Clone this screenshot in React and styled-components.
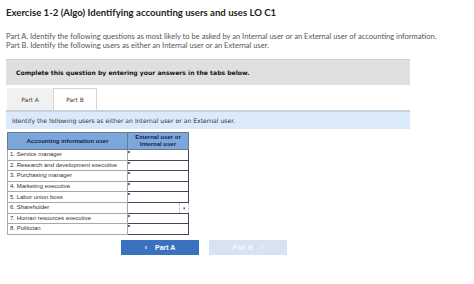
import styled, { createGlobalStyle } from "styled-components";

const GlobalStyle = createGlobalStyle`
  html, body {
    margin: 0;
    padding: 0;
    background: #ffffff;
  }
`;

const Page = styled.div`
  padding: 6px 6px 0 6px;
  width: 462px;
  font-family: Lato, "Liberation Sans", sans-serif;
  color: #333;
`;

const Title = styled.h1`
  margin: 0;
  font-size: 9.6px;
  line-height: 13px;
  font-weight: 700;
  color: #222;
`;

const Intro = styled.p`
  margin: 13px 0 0 0;
  font-size: 7.55px;
  line-height: 9px;
  color: #555;
`;

const Panel = styled.div`
  width: 404px;
  margin-top: 9px;
`;

const Notice = styled.div`
  height: 25px;
  background: #dfdfdf;
  border-top: 1px solid #cfcfcf;
  display: flex;
  align-items: center;
  padding-left: 10px;
  font-family: "DejaVu Sans", Verdana, sans-serif;
  font-weight: 700;
  font-size: 6.1px;
  color: #111;
`;

const Tabs = styled.div`
  display: flex;
  margin-top: 3px;
  padding-left: 1px;
`;

const Tab = styled.div`
  width: ${(p) => p.$w}px;
  height: 22px;
  display: flex;
  align-items: center;
  justify-content: center;
  box-sizing: border-box;
  font-family: "DejaVu Sans", Verdana, sans-serif;
  font-size: 5.9px;
  color: #444;
  background: ${(p) => (p.$active ? "#ffffff" : "#f1f1f1")};
  border: 1px solid ${(p) => (p.$active ? "#d4d4d4" : "#f1f1f1")};
  border-bottom: none;
  margin-bottom: ${(p) => (p.$active ? "-1px" : "0")};
  position: relative;
  z-index: 1;
`;

const Band = styled.div`
  height: 17px;
  background: #dbeafa;
  border-top: 2px solid #c5d2de;
  display: flex;
  align-items: center;
  padding-left: 6px;
  font-family: "DejaVu Sans", Verdana, sans-serif;
  font-size: 6.1px;
  color: #333;
`;

const Table = styled.table`
  margin: 3px 0 0 1px;
  width: 181px;
  table-layout: fixed;
  border-collapse: collapse;
  font-family: "Liberation Sans", Arial, sans-serif;
  font-size: 6px;
`;

const Col = styled.col`
  width: ${(p) => p.$w}px;
`;

const Head = styled.th`
  background: #7ca7dc;
  color: #1c2240;
  font-weight: 700;
  font-size: 6px;
  line-height: 7px;
  height: 16px;
  padding: 0;
  border: 1px solid #6b7a90;
  text-align: center;
`;

const Label = styled.td`
  height: 9.6px;
  padding: 0 0 0 2px;
  border: 1px solid #a8a8a8;
  color: #333;
  line-height: 9px;
  white-space: nowrap;
  overflow: hidden;
`;

const AnswerCell = styled.td`
  padding: 0;
  height: 9.6px;
  border: 1px solid ${(p) => (p.$select ? "#a9b6cc" : "#3d4560")};
  border-style: ${(p) => (p.$select ? "dotted" : "solid")};
  position: relative;
  background: #fff;
`;

const Marker = styled.span`
  position: absolute;
  left: 0;
  top: 1px;
  width: 0;
  height: 0;
  border-top: 1.5px solid transparent;
  border-bottom: 1.5px solid transparent;
  border-left: 3px solid #2a3150;
`;

const Caret = styled.span`
  position: absolute;
  right: 0;
  top: 0;
  bottom: 0;
  width: 8px;
  border-left: 1px dotted #a9b6cc;
  display: flex;
  align-items: center;
  justify-content: center;
  font-size: 5px;
  color: #666;
`;

const Nav = styled.div`
  display: flex;
  justify-content: center;
  gap: 10px;
  margin-top: 5px;
  padding-right: 8px;
`;

const NavButton = styled.div`
  width: 78px;
  height: 15px;
  display: flex;
  align-items: center;
  justify-content: center;
  gap: 8px;
  background: ${(p) => (p.$disabled ? "#d7e3f2" : "#3a72c0")};
  color: ${(p) => (p.$disabled ? "#f4f8fd" : "#ffffff")};
  font-family: "Liberation Sans", Arial, sans-serif;
  font-weight: 700;
  font-size: 7px;
`;

const rows = [
  "1. Service manager",
  "2. Research and development executive",
  "3. Purchasing manager",
  "4. Marketing executive",
  "5. Labor union boss",
  "6. Shareholder",
  "7. Human resources executive",
  "8. Politician",
];

export default function App() {
  return (
    <>
      <GlobalStyle />
      <Page>
        <Title>Exercise 1-2 (Algo) Identifying accounting users and uses LO C1</Title>
        <Intro>
          Part A. Identify the following questions as most likely to be asked by an Internal user or an External user of accounting information.
          <br />
          Part B. Identify the following users as either an Internal user or an External user.
        </Intro>
        <Panel>
          <Notice>Complete this question by entering your answers in the tabs below.</Notice>
          <Tabs>
            <Tab $w={46}>Part A</Tab>
            <Tab $w={44} $active>Part B</Tab>
          </Tabs>
          <Band>Identify the following users as either an Internal user or an External user.</Band>
          <Table>
            <colgroup>
              <Col $w={120} />
              <Col $w={61} />
            </colgroup>
            <thead>
              <tr>
                <Head>Accounting information user</Head>
                <Head>
                  External user or
                  <br />
                  Internal user
                </Head>
              </tr>
            </thead>
            <tbody>
              {rows.map((r, i) => (
                <tr key={r}>
                  <Label>{r}</Label>
                  {i === 5 ? (
                    <AnswerCell $select>
                      <Caret>▾</Caret>
                    </AnswerCell>
                  ) : (
                    <AnswerCell>
                      <Marker />
                    </AnswerCell>
                  )}
                </tr>
              ))}
            </tbody>
          </Table>
          <Nav>
            <NavButton>
              <span>‹</span>
              <span>Part A</span>
            </NavButton>
            <NavButton $disabled>
              <span>Part B</span>
              <span>›</span>
            </NavButton>
          </Nav>
        </Panel>
      </Page>
    </>
  );
}
